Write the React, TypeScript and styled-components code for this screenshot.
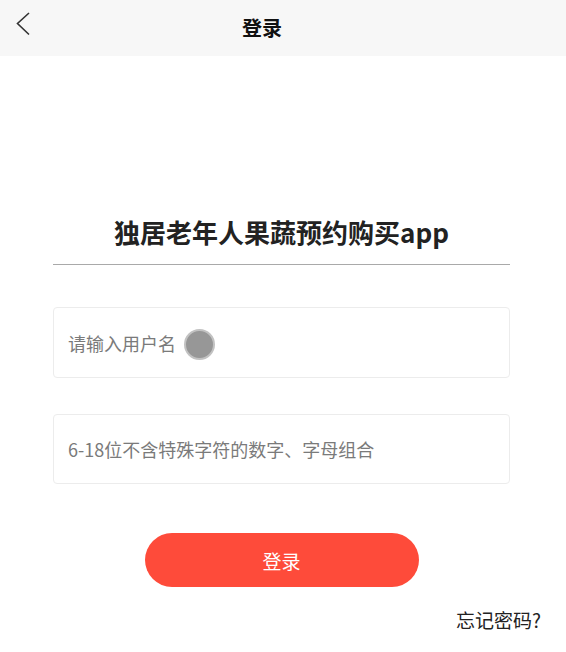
import React from "react";
import styled, { createGlobalStyle } from "styled-components";

const Global = createGlobalStyle`
  html, body { margin: 0; padding: 0; background: #ffffff; }
  body { font-family: "Noto Sans CJK SC", "Noto Sans", sans-serif; }
  * { box-sizing: border-box; }
`;

const Page = styled.div`
  width: 566px;
  min-height: 652px;
  display: flex;
  flex-direction: column;
`;

const Header = styled.header`
  height: 56px;
  background: #f7f7f7;
  display: grid;
  grid-template-columns: 56px 1fr 98px;
  align-items: center;
`;

const BackButton = styled.div`
  height: 56px;
  display: flex;
  align-items: flex-start;
  padding: 11px 0 0 15px;
`;

const HeaderTitle = styled.h1`
  margin: 0;
  text-align: center;
  font-size: 20px;
  font-weight: 700;
  color: #111;
  line-height: 56px;
`;

const Content = styled.main`
  margin-left: 53px;
  width: 457px;
  display: flex;
  flex-direction: column;
`;

const AppTitle = styled.h2`
  margin: 158px 0 0;
  text-align: center;
  font-size: 26px;
  line-height: 36px;
  font-weight: 700;
  color: #222;
`;

const Divider = styled.div`
  margin-top: 14px;
  height: 1px;
  background: #a9a9a9;
`;

const Field = styled.div<{ $top: number; $h: number }>`
  margin-top: ${(p) => p.$top}px;
  height: ${(p) => p.$h}px;
  border: 1px solid #ececec;
  border-radius: 4px;
  display: flex;
  align-items: center;
  gap: 8px;
  padding-left: 14px;
`;

const Placeholder = styled.span`
  font-size: 18px;
  color: #7a7a7a;
  line-height: 24px;
`;

const Dot = styled.span`
  width: 31px;
  height: 31px;
  border-radius: 50%;
  background: #979797;
  border: 2px solid #c2c2c2;
  margin-top: 4px;
`;

const SubmitButton = styled.button`
  align-self: center;
  margin-top: 49px;
  width: 274px;
  height: 54px;
  border: none;
  border-radius: 27px;
  background: #fe4b3a;
  color: #fff;
  font-family: inherit;
  font-size: 19px;
  cursor: pointer;
`;

const Forgot = styled.div`
  margin-top: 21px;
  padding-right: 25px;
  text-align: right;
  font-size: 19px;
  line-height: 24px;
  color: #222;
`;

export default function App() {
  return (
    <Page>
      <Global />
      <Header>
        <BackButton>
          <svg width="16" height="26" viewBox="0 0 16 26">
            <path d="M14 2 L2.5 12.5 L14 23.5" fill="none" stroke="#333" strokeWidth="1.6" />
          </svg>
        </BackButton>
        <HeaderTitle>登录</HeaderTitle>
        <div />
      </Header>
      <Content>
        <AppTitle>独居老年人果蔬预约购买app</AppTitle>
        <Divider />
        <Field $top={42} $h={71}>
          <Placeholder>请输入用户名</Placeholder>
          <Dot />
        </Field>
        <Field $top={36} $h={70}>
          <Placeholder>6-18位不含特殊字符的数字、字母组合</Placeholder>
        </Field>
        <SubmitButton>登录</SubmitButton>
      </Content>
      <Forgot>忘记密码?</Forgot>
    </Page>
  );
}
